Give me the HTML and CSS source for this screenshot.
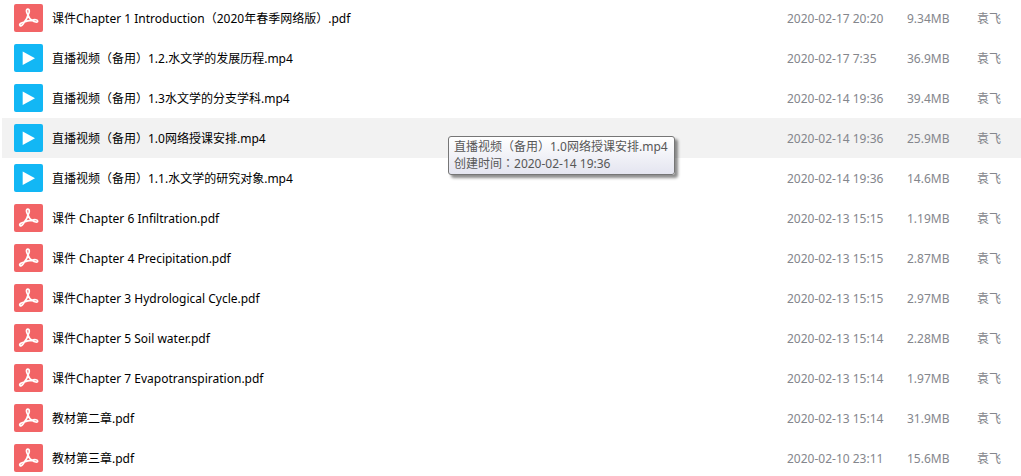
FILE: index.html
```
<!DOCTYPE html>
<html lang="zh-CN">
<head>
<meta charset="utf-8">
<title>课件</title>
<link rel="stylesheet" href="styles.css">
</head>
<body>
<svg class="symbols" aria-hidden="true">
  <symbol id="pdf" viewBox="0 0 29 28">
    <rect class="pdf-tile" width="29" height="28" rx="2"/>
    <path class="pdf-line" d="M14 11C12.200 8.500 11.800 5.200 13.800 5.200S15.700 8.500 14 11C14.700 13.200 16 15.200 18 16.300C20.500 15 23.800 15.800 23.700 17.200C23.500 18.800 20.500 18 18 16.300C15.200 16.500 12.500 17 10.300 18C9.200 20.800 7.200 22.500 6 21.500C4.800 20.300 7.200 18.600 10.300 18C12.200 15.800 13.600 13.500 14 11Z"/>
  </symbol>
  <symbol id="video" viewBox="0 0 29 28">
    <rect class="video-tile" width="29" height="28" rx="2"/>
    <path class="video-arrow" d="M8.700 7.500L21 14.200L8.700 21Z"/>
  </symbol>
</svg>
<main class="files">
  <table class="file-table">
    <colgroup><col class="col-name"><col class="col-date"><col class="col-size"><col class="col-owner"></colgroup>
    <tbody>
      <tr><td><div class="file"><svg class="icon"><use href="#pdf"/></svg><span class="name">课件Chapter 1 Introduction（2020年春季网络版）.pdf</span></div></td><td class="meta">2020-02-17 20:20</td><td class="meta">9.34MB</td><td class="meta">袁飞</td></tr>
      <tr><td><div class="file"><svg class="icon"><use href="#video"/></svg><span class="name">直播视频（备用）1.2.水文学的发展历程.mp4</span></div></td><td class="meta">2020-02-17 7:35</td><td class="meta">36.9MB</td><td class="meta">袁飞</td></tr>
      <tr><td><div class="file"><svg class="icon"><use href="#video"/></svg><span class="name">直播视频（备用）1.3水文学的分支学科.mp4</span></div></td><td class="meta">2020-02-14 19:36</td><td class="meta">39.4MB</td><td class="meta">袁飞</td></tr>
      <tr class="active"><td><div class="file"><svg class="icon"><use href="#video"/></svg><span class="name">直播视频（备用）1.0网络授课安排.mp4</span></div></td><td class="meta">2020-02-14 19:36</td><td class="meta">25.9MB</td><td class="meta">袁飞</td></tr>
      <tr><td><div class="file"><svg class="icon"><use href="#video"/></svg><span class="name">直播视频（备用）1.1.水文学的研究对象.mp4</span></div></td><td class="meta">2020-02-14 19:36</td><td class="meta">14.6MB</td><td class="meta">袁飞</td></tr>
      <tr><td><div class="file"><svg class="icon"><use href="#pdf"/></svg><span class="name">课件 Chapter 6 Infiltration.pdf</span></div></td><td class="meta">2020-02-13 15:15</td><td class="meta">1.19MB</td><td class="meta">袁飞</td></tr>
      <tr><td><div class="file"><svg class="icon"><use href="#pdf"/></svg><span class="name">课件 Chapter 4 Precipitation.pdf</span></div></td><td class="meta">2020-02-13 15:15</td><td class="meta">2.87MB</td><td class="meta">袁飞</td></tr>
      <tr><td><div class="file"><svg class="icon"><use href="#pdf"/></svg><span class="name">课件Chapter 3 Hydrological Cycle.pdf</span></div></td><td class="meta">2020-02-13 15:15</td><td class="meta">2.97MB</td><td class="meta">袁飞</td></tr>
      <tr><td><div class="file"><svg class="icon"><use href="#pdf"/></svg><span class="name">课件Chapter 5 Soil water.pdf</span></div></td><td class="meta">2020-02-13 15:14</td><td class="meta">2.28MB</td><td class="meta">袁飞</td></tr>
      <tr><td><div class="file"><svg class="icon"><use href="#pdf"/></svg><span class="name">课件Chapter 7 Evapotranspiration.pdf</span></div></td><td class="meta">2020-02-13 15:14</td><td class="meta">1.97MB</td><td class="meta">袁飞</td></tr>
      <tr><td><div class="file"><svg class="icon"><use href="#pdf"/></svg><span class="name">教材第二章.pdf</span></div></td><td class="meta">2020-02-13 15:14</td><td class="meta">31.9MB</td><td class="meta">袁飞</td></tr>
      <tr><td><div class="file"><svg class="icon"><use href="#pdf"/></svg><span class="name">教材第三章.pdf</span></div></td><td class="meta">2020-02-10 23:11</td><td class="meta">15.6MB</td><td class="meta">袁飞</td></tr>
    </tbody>
  </table>
  <div class="tooltip" role="tooltip">直播视频（备用）1.0网络授课安排.mp4<br>创建时间<span class="colon" lang="zh-TW">：</span>2020-02-14 19:36</div>
</main>
</body>
</html>
```
FILE: styles.css
```
body {
  margin: 0;
  overflow: hidden;
  background: #fff;
  color: #000;
  font: 12px/18px "Noto Sans", "Noto Sans CJK SC", sans-serif;
}

.symbols {
  position: absolute;
  width: 0;
  height: 0;
}

/* The list is scrolled slightly past its first row's edge. */
.files {
  position: relative;
  margin: -2px 0 0 2px;
}

.file-table {
  width: 100%;
  table-layout: fixed;
  border-collapse: collapse;
}

.col-date { width: 120px; }
.col-size { width: 70px; }
.col-owner { width: 44px; }

td {
  box-sizing: border-box;
  height: 40px;
  padding: 0;
  white-space: nowrap;
}

.active { background: #f2f2f2; }

.file {
  display: flex;
  align-items: center;
  gap: 9px;
  padding-left: 12px;
}

.icon {
  flex: none;
  width: 29px;
  height: 28px;
}

.name { padding-top: 2px; }

.meta {
  padding-top: 2px;
  color: #84868c;
}

.pdf-tile { fill: #f26466; }
.pdf-line {
  fill: none;
  stroke: #fff;
  stroke-width: 1.7;
  stroke-linejoin: round;
}
.video-tile { fill: #12b7f5; }
.video-arrow { fill: #fff; }

.tooltip {
  position: absolute;
  top: 138px;
  left: 446px;
  padding: 1px 6px 2px 5px;
  border: 1px solid #767676;
  border-radius: 3px;
  background: linear-gradient(#fff, #e4e5f0);
  box-shadow: 3px 3px 3px rgba(0, 0, 0, .45);
  color: #575757;
  line-height: 17px;
  white-space: nowrap;
}

.colon {
  font-family: "Noto Sans CJK TC", sans-serif;
  line-height: 1;
}
```
